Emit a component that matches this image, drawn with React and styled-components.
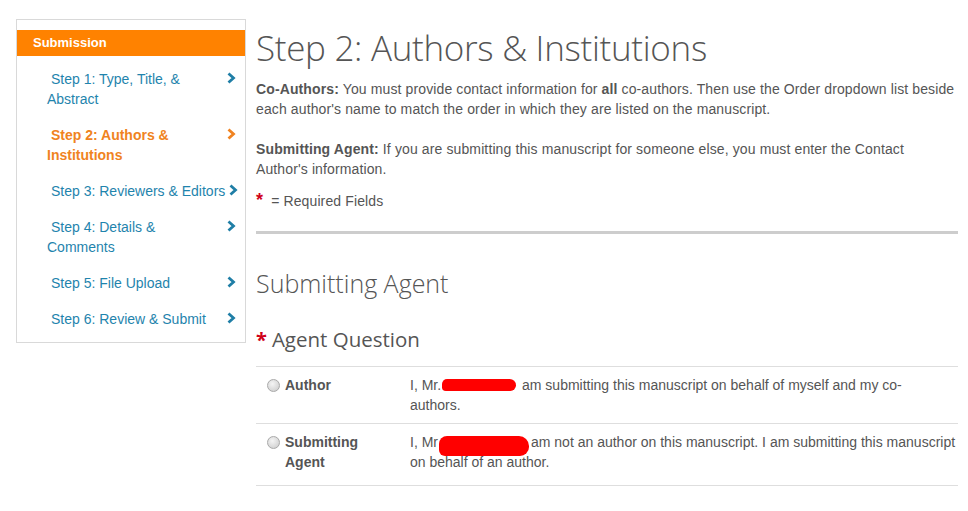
import React from 'react';
import styled, { createGlobalStyle } from 'styled-components';

const GlobalStyle = createGlobalStyle`
  html, body {
    margin: 0;
    padding: 0;
    background: #fff;
  }
  body {
    font-family: "Liberation Sans", Arial, sans-serif;
    font-size: 14px;
    color: #555;
  }
`;

const Page = styled.div`
  display: flex;
  align-items: flex-start;
  gap: 10px;
  padding: 19px 10px 0 16px;
  width: 968px;
  box-sizing: border-box;
`;

const Sidebar = styled.nav`
  width: 230px;
  flex-shrink: 0;
  box-sizing: border-box;
  border: 1px solid #d9d9d9;
  padding: 10px 0 5px;
`;

const SideHeader = styled.div`
  background: #ff8200;
  color: #fff;
  font-weight: bold;
  font-size: 13px;
  height: 26px;
  line-height: 26px;
  padding-left: 16px;
  margin-bottom: 5px;
`;

const StepList = styled.ul`
  list-style: none;
  margin: 0;
  padding: 0;
`;

const StepItem = styled.li`
  display: flex;
  align-items: flex-start;
  padding: 8px 9px 8px 30px;
  line-height: 20px;
  font-size: 14px;
  color: ${p => (p.$active ? '#f08321' : '#1f84ad')};
  font-weight: ${p => (p.$active ? 'bold' : 'normal')};
`;

const StepLabel = styled.span`
  flex: 1;
  text-indent: 4px;
  white-space: ${p => (p.$nowrap ? 'nowrap' : 'normal')};
  margin-right: 4px;
`;

const Chevron = styled.svg`
  width: 9px;
  height: 12px;
  margin-top: 3px;
  flex-shrink: 0;
`;

const Main = styled.main`
  flex: 1;
  min-width: 0;
`;

const Title = styled.h1`
  font-family: "Open Sans", sans-serif;
  font-weight: 300;
  font-size: 35px;
  color: #555;
  margin: 7px 0 9px;
  line-height: 44px;
  letter-spacing: -0.3px;
`;

const Para = styled.p`
  margin: 0 0 20px;
  line-height: 20px;
  letter-spacing: 0.12px;
`;

const Required = styled.p`
  margin: -8px 0 20px;
  line-height: 20px;
  letter-spacing: 0.12px;
`;

const Star = styled.span`
  color: #d0021b;
  font-weight: bold;
  font-size: ${p => p.$size || '18px'};
  margin-right: ${p => p.$gap || '4px'};
  vertical-align: ${p => p.$align || 'top'};
  line-height: 1;
`;

const Rule = styled.hr`
  border: 0;
  height: 3px;
  background: #cdcdcd;
  margin: 0 0 32px;
`;

const SectionTitle = styled.h2`
  font-family: "Open Sans", sans-serif;
  font-weight: 300;
  font-size: 25px;
  color: #555;
  margin: 0 0 25px;
  line-height: 34px;
`;

const Question = styled.h3`
  font-family: "Open Sans", sans-serif;
  font-weight: 400;
  font-size: 20.5px;
  color: #555;
  margin: 0 0 13px;
  line-height: 28px;
`;

const Table = styled.div`
  border-top: 1px solid #dedede;
`;

const Row = styled.label`
  display: flex;
  align-items: flex-start;
  border-bottom: 1px solid #dedede;
  padding: 8px 0 ${p => p.$pb || 8}px 11px;
  line-height: 20px;
`;

const Choice = styled.div`
  display: flex;
  align-items: flex-start;
  width: 143px;
  padding-right: 16px;
  box-sizing: border-box;
  flex-shrink: 0;
  font-weight: bold;
`;

const Radio = styled.span`
  width: 11px;
  height: 11px;
  border-radius: 50%;
  border: 1px solid #a9a9a9;
  background: radial-gradient(circle at 40% 35%, #f4f4f4, #c9c9c9);
  margin: 4px 5px 0 0;
  flex-shrink: 0;
`;

const Desc = styled.div`
  flex: 1;
`;

const Redact = styled.span`
  display: inline-block;
  width: ${p => p.$w}px;
  height: ${p => p.$h}px;
  background: #ff0000;
  border-radius: 8px 10px 9px 6px;
  vertical-align: ${p => p.$v}px;
  margin: ${p => p.$m || 0}px 2px ${p => p.$m || 0}px 1px;
`;

const steps = [
  { label: 'Step 1: Type, Title, & Abstract' },
  { label: 'Step 2: Authors & Institutions', active: true },
  { label: 'Step 3: Reviewers & Editors', nowrap: true },
  { label: 'Step 4: Details & Comments' },
  { label: 'Step 5: File Upload' },
  { label: 'Step 6: Review & Submit' },
];

const ChevronIcon = ({ color }) => (
  <Chevron viewBox="0 0 9 12">
    <path d="M1.5 1.5 L6.5 6 L1.5 10.5" fill="none" stroke={color} strokeWidth="2.8" />
  </Chevron>
);

export default function App() {
  return (
    <>
      <GlobalStyle />
      <Page>
        <Sidebar>
          <SideHeader>Submission</SideHeader>
          <StepList>
            {steps.map(s => (
              <StepItem key={s.label} $active={s.active}>
                <StepLabel $nowrap={s.nowrap}>{s.label}</StepLabel>
                <ChevronIcon color={s.active ? '#f08321' : '#1f7ea6'} />
              </StepItem>
            ))}
          </StepList>
        </Sidebar>
        <Main>
          <Title>Step 2: Authors &amp; Institutions</Title>
          <Para>
            <b>Co-Authors:</b> You must provide contact information for <b>all</b> co-authors. Then use the Order dropdown list beside each author's name to match the order in which they are listed on the manuscript.
          </Para>
          <Para>
            <b>Submitting Agent:</b> If you are submitting this manuscript for someone else, you must enter the Contact Author's information.
          </Para>
          <Required>
            <Star>*</Star> = Required Fields
          </Required>
          <Rule />
          <SectionTitle>Submitting Agent</SectionTitle>
          <Question>
            <Star $size="20px" $align="baseline" $gap="5px">*</Star>Agent Question
          </Question>
          <Table>
            <Row>
              <Choice><Radio />Author</Choice>
              <Desc>
                I, Mr.<Redact $w={74} $h={12} $v={-1} /> am submitting this manuscript on behalf of myself and my co-<br />authors.
              </Desc>
            </Row>
            <Row $pb={13}>
              <Choice><Radio />Submitting Agent</Choice>
              <Desc>
                I, Mr<Redact $w={90} $h={20} $v={-5} $m={-4} />am not an author on this manuscript. I am submitting this manuscript on behalf of an author.
              </Desc>
            </Row>
          </Table>
        </Main>
      </Page>
    </>
  );
}
